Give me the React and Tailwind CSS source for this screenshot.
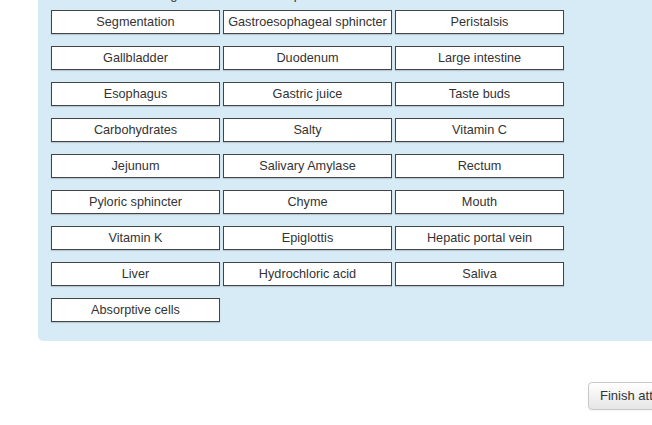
import React from "react";

const items = [
  "Segmentation", "Gastroesophageal sphincter", "Peristalsis",
  "Gallbladder", "Duodenum", "Large intestine",
  "Esophagus", "Gastric juice", "Taste buds",
  "Carbohydrates", "Salty", "Vitamin C",
  "Jejunum", "Salivary Amylase", "Rectum",
  "Pyloric sphincter", "Chyme", "Mouth",
  "Vitamin K", "Epiglottis", "Hepatic portal vein",
  "Liver", "Hydrochloric acid", "Saliva",
  "Absorptive cells",
];

export default function App() {
  return (
    <div className="w-[652px] h-[425px] overflow-hidden bg-white font-['Liberation_Sans',Arial,sans-serif] text-[#333]">
      <div className="ml-[38px] mt-[-30px] w-[700px] rounded-[5px] bg-[#d7ebf7] pl-[13px] pt-[16px] pb-[19px]">
        <p className="text-[13px] leading-[18px] mb-[6px] whitespace-nowrap">
          Now use the following terms below to complete the statements.
        </p>
        <div className="grid grid-cols-[repeat(3,169px)] gap-x-[3px] gap-y-[12px]">
          {items.map((t) => (
            <div
              key={t}
              className="h-[24px] border border-[#444] bg-white flex items-center justify-center text-[12.7px] leading-none text-[#333] shadow-[0_1px_1px_rgba(0,0,0,0.15)]"
            >
              {t}
            </div>
          ))}
        </div>
      </div>
      <div className="mt-[41px] pl-[588px] w-[800px]">
        <button className="h-[28px] px-[11px] rounded-[4px] border border-[#c8c8c8] bg-gradient-to-b from-white to-[#e6e6e6] text-[13px] text-[#333] whitespace-nowrap shadow-[0_1px_2px_rgba(0,0,0,0.05)]">
          Finish attempt ...
        </button>
      </div>
    </div>
  );
}
